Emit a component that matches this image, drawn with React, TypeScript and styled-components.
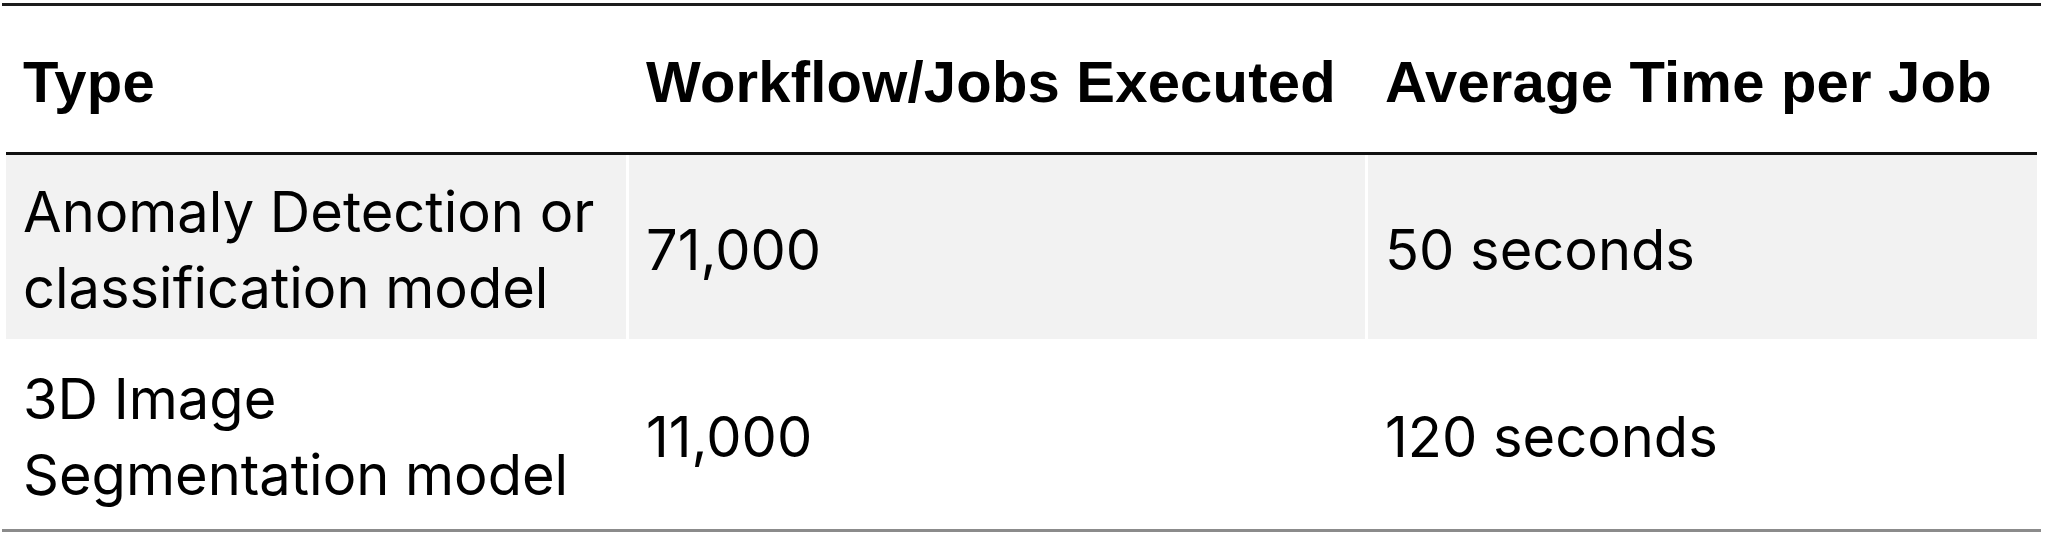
import React from "react";
import styled, { createGlobalStyle } from "styled-components";

const GlobalStyle = createGlobalStyle`
  html, body {
    margin: 0;
    padding: 0;
    background: #ffffff;
  }
  body {
    font-family: Inter, "Noto Sans", sans-serif;
    color: #000000;
  }
`;

const Frame = styled.div`
  margin: 3px 7px 0 2px;
  padding: 0 4px;
  border-top: 3px solid #1c1c1c;
  border-bottom: 3px solid #8b8b8b;
`;

const Row = styled.div<{ $head?: boolean; $height: number }>`
  display: grid;
  grid-template-columns: 620px 736px 669px;
  column-gap: 3px;
  height: ${(p) => p.$height}px;
  border-bottom: ${(p) => (p.$head ? "3px solid #111111" : "none")};
`;

const HeadCell = styled.div`
  box-sizing: border-box;
  padding: 43px 0 0 17px;
  font-family: "Liberation Sans", Arial, sans-serif;
  font-weight: 700;
  font-size: 58px;
  line-height: 66px;
  letter-spacing: 0.2px;
  white-space: nowrap;
`;

const Cell = styled.div<{ $shaded?: boolean }>`
  box-sizing: border-box;
  display: flex;
  align-items: center;
  padding: 6px 0 0 17px;
  background: ${(p) => (p.$shaded ? "#f2f2f2" : "transparent")};
  font-family: Inter, "Noto Sans", sans-serif;
  font-weight: 400;
  font-size: 56px;
  line-height: 76px;
`;

const rows = [
  {
    type: ["Anomaly Detection or", "classification model"],
    jobs: "71,000",
    time: "50 seconds",
    shaded: true,
    height: 184,
  },
  {
    type: ["3D Image", "Segmentation model"],
    jobs: "11,000",
    time: "120 seconds",
    shaded: false,
    height: 190,
  },
];

export default function App() {
  return (
    <>
      <GlobalStyle />
      <Frame>
        <Row $head $height={146}>
          <HeadCell>Type</HeadCell>
          <HeadCell>Workflow/Jobs Executed</HeadCell>
          <HeadCell>Average Time per Job</HeadCell>
        </Row>
        {rows.map((r) => (
          <Row key={r.jobs} $height={r.height}>
            <Cell $shaded={r.shaded}>
              <span>
                {r.type[0]}
                <br />
                {r.type[1]}
              </span>
            </Cell>
            <Cell $shaded={r.shaded}>{r.jobs}</Cell>
            <Cell $shaded={r.shaded}>{r.time}</Cell>
          </Row>
        ))}
      </Frame>
    </>
  );
}
